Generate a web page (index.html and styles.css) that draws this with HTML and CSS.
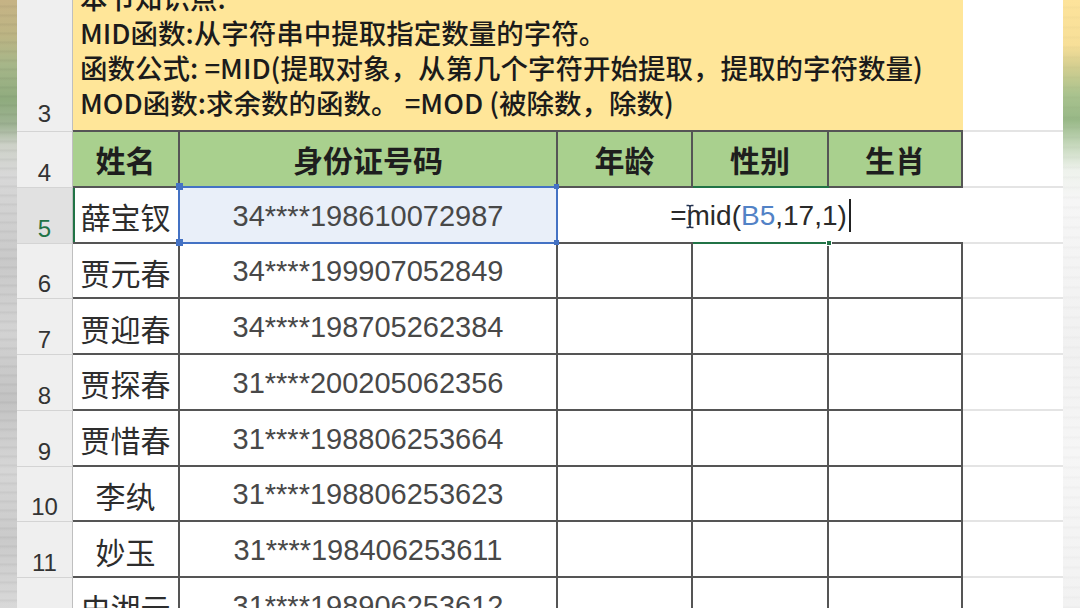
FILE: index.html
```html
<!DOCTYPE html>
<html lang="zh-CN">
<head>
<meta charset="utf-8">
<title>MID函数</title>
<link rel="stylesheet" href="styles.css">
</head>
<body>
<div class="screen">
  <div class="strip strip-left"></div>
  <div class="sheet">
    <div class="rh rh-3">3</div>
    <div class="note">
      <div class="note-line">本节知识点:</div>
      <div class="note-line">MID函数:从字符串中提取指定数量的字符。</div>
      <div class="note-line">函数公式: =MID(提取对象，从第几个字符开始提取，提取的字符数量)</div>
      <div class="note-line">MOD函数:求余数的函数。 =MOD (被除数，除数)</div>
    </div>
    <div class="blank"></div>

    <div class="rh">4</div>
    <div class="cell head">姓名</div>
    <div class="cell head">身份证号码</div>
    <div class="cell head">年龄</div>
    <div class="cell head head-active">性别</div>
    <div class="cell head">生肖</div>
    <div class="blank"></div>

    <div class="rh rh-active">5</div>
    <div class="cell name a-active">薛宝钗</div>
    <div class="cell id b-sel">34****198610072987<span class="hd hd-tl"></span><span class="hd hd-bl"></span><span class="hd hd-sm hd-tr"></span><span class="hd hd-sm hd-br"></span></div>
    <div class="cell edit">
      <span class="formula-wrap"><span class="formula">=<span class="ibeam"><svg width="10" height="25" viewBox="0 0 10 25"><path d="M1.5 1.5 H3.5 Q5 1.5 5 3 Q5 1.5 6.5 1.5 H8.5 M5 3 V22 M1.5 23.5 H3.5 Q5 23.5 5 22 Q5 23.5 6.5 23.5 H8.5" fill="none" stroke="#23324f" stroke-width="1.6"/></svg></span>mid(<span class="ref">B5</span>,17,1)</span><span class="caret"></span></span>
      <span class="d-top"></span><span class="d-bot"></span><span class="fill"></span>
    </div>
    <div class="blank"></div>

    <div class="rh">6</div>
    <div class="cell name">贾元春</div>
    <div class="cell id">34****199907052849</div>
    <div class="cell"></div>
    <div class="cell"></div>
    <div class="cell"></div>
    <div class="blank"></div>

    <div class="rh">7</div>
    <div class="cell name">贾迎春</div>
    <div class="cell id">34****198705262384</div>
    <div class="cell"></div>
    <div class="cell"></div>
    <div class="cell"></div>
    <div class="blank"></div>

    <div class="rh">8</div>
    <div class="cell name">贾探春</div>
    <div class="cell id">31****200205062356</div>
    <div class="cell"></div>
    <div class="cell"></div>
    <div class="cell"></div>
    <div class="blank"></div>

    <div class="rh">9</div>
    <div class="cell name">贾惜春</div>
    <div class="cell id">31****198806253664</div>
    <div class="cell"></div>
    <div class="cell"></div>
    <div class="cell"></div>
    <div class="blank"></div>

    <div class="rh">10</div>
    <div class="cell name">李纨</div>
    <div class="cell id">31****198806253623</div>
    <div class="cell"></div>
    <div class="cell"></div>
    <div class="cell"></div>
    <div class="blank"></div>

    <div class="rh">11</div>
    <div class="cell name">妙玉</div>
    <div class="cell id">31****198406253611</div>
    <div class="cell"></div>
    <div class="cell"></div>
    <div class="cell"></div>
    <div class="blank"></div>

    <div class="rh">12</div>
    <div class="cell name">史湘云</div>
    <div class="cell id">31****198906253612</div>
    <div class="cell"></div>
    <div class="cell"></div>
    <div class="cell"></div>
    <div class="blank"></div>
  </div>
  <div class="strip strip-right"></div>
</div>
</body>
</html>
```

FILE: styles.css
```css
* { box-sizing: border-box; }
html, body { margin: 0; padding: 0; }
body { width: 1080px; height: 608px; overflow: hidden; background: #fff; }

.screen { display: flex; width: 1080px; height: 608px; overflow: hidden; }

.strip { width: 17px; flex: none; height: 608px; }
.strip-left {
  background:
    repeating-linear-gradient(to bottom, rgba(0,0,0,0) 0, rgba(0,0,0,0) 5px, rgba(0,0,0,0.05) 6px, rgba(0,0,0,0) 9px),
    linear-gradient(to bottom, #c6b385 0, #bdb584 35px, #a6b689 65px, #8fab7e 100px, #9fb394 125px, #cdd1c8 145px, #d8d8d8 175px, #c9c9c9 260px, #d3d3d3 330px, #c3c3c3 400px, #d6d6d6 470px, #cacaca 540px, #d9d9d9 608px);
}
.strip-right {
  background:
    repeating-linear-gradient(to bottom, rgba(0,0,0,0) 0, rgba(0,0,0,0) 6px, rgba(0,0,0,0.025) 7px, rgba(0,0,0,0) 10px),
    linear-gradient(to bottom, #fde39b 0, #f7df98 45px, #d6cf90 65px, #a9c28e 95px, #98b887 120px, #c6d8bc 145px, #eef2ec 170px, #f6f6f6 200px, #f1f1f1 350px, #f6f6f6 450px, #f2f2f2 608px);
}

.sheet {
  display: grid;
  grid-template-columns: 56px 107px 378px 135px 136px 134px 100px;
  grid-template-rows: 132px repeat(8, 55.75px) 56px;
  width: 1046px;
  height: 608px;
  overflow: hidden;
}

/* row headers */
.rh {
  background: #efefef;
  border-right: 1px solid #bfbfbf;
  border-bottom: 1px solid #d4d4d4;
  display: flex;
  align-items: flex-end;
  justify-content: center;
  font-family: "Liberation Sans", Arial, sans-serif;
  font-size: 24px;
  line-height: 24px;
  color: #333;
  padding-bottom: 2px;
}
.rh-3 { padding-bottom: 5px; }
.rh-active { background: #e1e1e1; color: #217346; }

/* note row (row 3) */
.note {
  grid-column: span 5;
  background: #ffe699;
  border-bottom: 2px solid #555;
  display: flex;
  flex-direction: column;
  justify-content: flex-end;
  overflow: hidden;
  padding: 0 0 10px 7px;
  font-family: "Noto Sans CJK SC", sans-serif;
  font-weight: 500;
  font-size: 27.5px;
  line-height: 35px;
  color: #1b1b1b;
  white-space: nowrap;
}
.note-line { flex-shrink: 0; height: 35px; }

/* table cells */
.cell {
  border-right: 2px solid #555;
  border-bottom: 2px solid #555;
  display: flex;
  align-items: center;
  justify-content: center;
  background: #fff;
  white-space: nowrap;
}
.head {
  background: #a9d08e;
  font-family: "Noto Sans CJK SC", sans-serif;
  font-weight: 700;
  font-size: 30px;
  color: #1e1e1e;
}
.head-active { border-bottom-color: #217346; }
.name {
  font-family: "Noto Sans CJK SC", sans-serif;
  font-size: 30px;
  color: #2d2d2d;
  padding-top: 3px;
}
.id {
  font-family: "Liberation Sans", Arial, sans-serif;
  font-size: 29px;
  color: #484848;
  padding-top: 3px;
}

.blank {
  background: #fff;
  border-bottom: 2px solid #e4e4e4;
}

/* active row 5 */
.a-active { box-shadow: inset 2px 0 0 #217346; }

.b-sel { background: #e9eff9; position: relative; }
.b-sel::after {
  content: "";
  position: absolute;
  top: -2px; left: -2px; right: -2px; bottom: -2px;
  border: 2px solid #4472c4;
  z-index: 2;
}
.hd {
  position: absolute;
  width: 7px; height: 7px;
  background: #4472c4;
  z-index: 3;
}
.hd-tl { left: -4px; top: -5px; }
.hd-bl { left: -4px; top: 51px; }
.hd-sm { width: 5px; height: 5px; }
.hd-tr { left: 374px; top: -4px; }
.hd-br { left: 374px; top: 52px; }

.edit {
  grid-column: span 3;
  border-right: none;
  position: relative;
  font-family: "Liberation Sans", Arial, sans-serif;
  font-size: 28px;
  color: #2a2a2a;
  padding-top: 2px;
}
.formula-wrap { display: inline-flex; align-items: center; }
.formula { position: relative; }
.ref { color: #5282c6; }
.ibeam { position: absolute; left: 15px; top: 4px; line-height: 0; }
.caret {
  display: inline-block;
  width: 2px;
  height: 33px;
  background: #222;
  margin-left: 2px;
}
.d-top, .d-bot {
  position: absolute;
  left: 135px;
  width: 136px;
  height: 2px;
  background: #217346;
}
.d-top { top: -2px; }
.d-bot { bottom: -2px; }
.fill {
  position: absolute;
  left: 268px;
  bottom: -4px;
  width: 6px;
  height: 6px;
  background: #217346;
  border: 1px solid #fff;
}
```
